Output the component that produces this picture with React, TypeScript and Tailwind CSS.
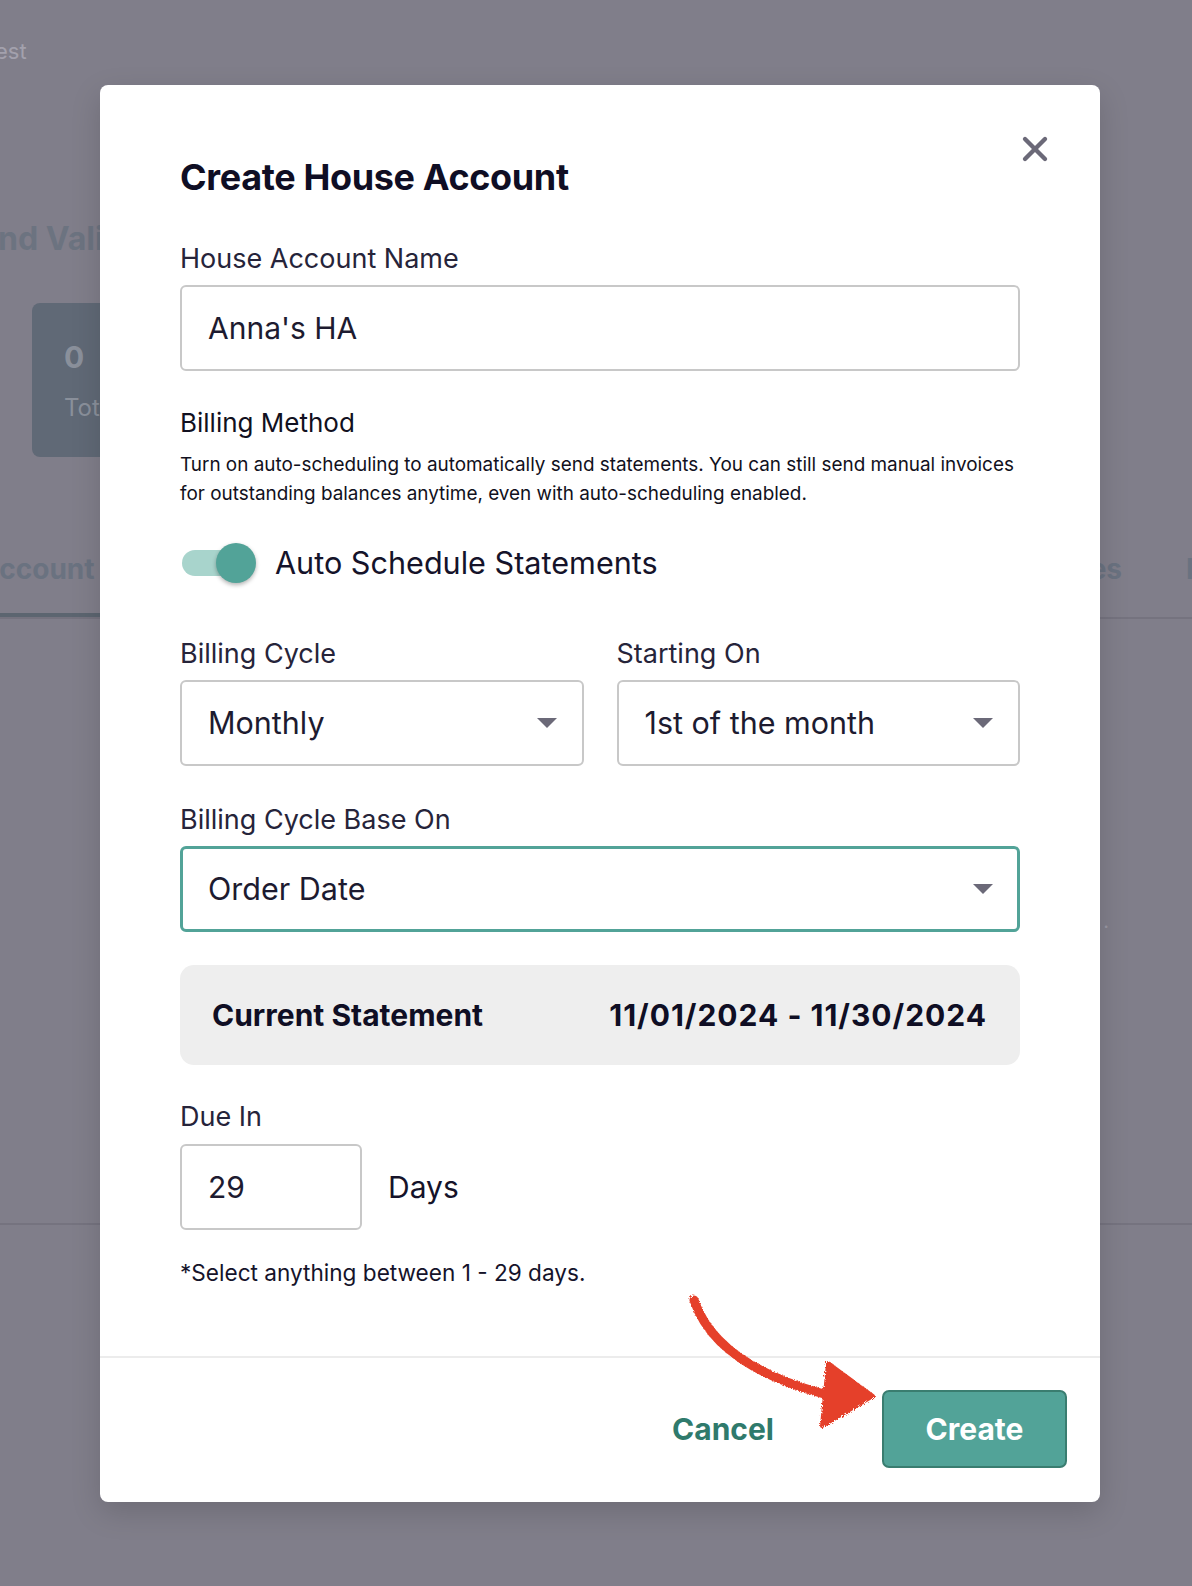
import { X } from "lucide-react";

function Chevron() {
  return (
    <svg width="20" height="10" viewBox="0 0 20 10" className="shrink-0">
      <path d="M0 0 L20 0 L10 10 Z" fill="#6b6978" />
    </svg>
  );
}

function SelectBox({ value, active }: { value: string; active?: boolean }) {
  return (
    <div
      className={
        active
          ? "flex h-[86px] items-center justify-between rounded-[6px] border-[3px] border-[#52a398] pl-[25px] pr-[24px]"
          : "flex h-[86px] items-center justify-between rounded-[6px] border-2 border-[#c8c8c8] pl-[26px] pr-[25px]"
      }
    >
      <span className="text-[30.5px] leading-[36px] text-[#1d1b30]">{value}</span>
      <Chevron />
    </div>
  );
}

function Label({ children }: { children: React.ReactNode }) {
  return <div className="text-[27px] leading-[32px] text-[#26243a]">{children}</div>;
}

function Toggle() {
  return (
    <div className="relative h-[44px] w-[78px] shrink-0">
      <div className="absolute left-[2px] top-[9px] h-[26px] w-[70px] rounded-full bg-[#a8d4cc]" />
      <div className="absolute left-[36px] top-[2px] h-[40px] w-[40px] rounded-full bg-[#52a398] shadow-[0_2px_4px_rgba(0,0,0,0.3)]" />
    </div>
  );
}

function BackgroundPage() {
  return (
    <div className="flex h-[1586px] flex-col text-[#6e7582]">
      <div className="mt-[38px] -ml-[5px] text-[22px] leading-[26px] text-[#a3a1ad]">est</div>
      <div className="mt-[157px] -ml-[2px] text-[32px] font-bold leading-[36px] text-[#6c7380]">nd Validity</div>
      <div className="ml-[32px] mt-[46px] flex h-[154px] w-[300px] flex-col rounded-[8px] bg-[#606976] pl-[32px] pt-[36px]">
        <div className="text-[30px] font-bold leading-[36px] text-[#8a909b]">0</div>
        <div className="mt-[19px] text-[24px] leading-[28px] text-[#8a909b]">Total</div>
      </div>
      <div className="mt-[94px] flex border-b-2 border-[#75737f]">
        <div className="-ml-[23px] w-[260px] border-b-4 border-[#5c6570] pb-[26px] pl-[2px] text-[28px] font-bold leading-[36px] text-[#6a7280]">
          Account
        </div>
        <div className="ml-auto flex gap-[64px] text-[28px] font-bold leading-[36px] text-[#6a7280]">
          <span>Invoices</span>
          <span className="w-[6px] overflow-hidden">I</span>
        </div>
      </div>
      <div className="flex flex-1 flex-col">
        <div className="ml-auto mr-[83px] mt-[287px] text-[20px] text-[#9a98a3]">.</div>
        <div className="mt-[287px] border-t-2 border-[#75737f]" />
      </div>
    </div>
  );
}

function Arrow() {
  return (
    <svg
      className="pointer-events-none absolute left-0 top-0"
      width="1192"
      height="1586"
      viewBox="0 0 1192 1586"
    >
      <defs>
        <filter id="rough" x="-10%" y="-10%" width="120%" height="120%">
          <feTurbulence type="fractalNoise" baseFrequency="0.9" numOctaves="2" result="n" />
          <feDisplacementMap in="SourceGraphic" in2="n" scale="5" />
        </filter>
      </defs>
      <g filter="url(#rough)" fill="#e5402a" stroke="#e5402a">
        <path d="M694 1300 C 706 1336, 742 1372, 824 1394" fill="none" strokeWidth="9" strokeLinecap="round" />
        <path d="M828 1363 L873 1396 L822 1426 Z" strokeWidth="4" strokeLinejoin="round" />
      </g>
    </svg>
  );
}

export default function App() {
  return (
    <div className="relative h-[1586px] w-full overflow-hidden bg-[#807e8a] font-['Inter',sans-serif]">
      <BackgroundPage />

      <div className="absolute inset-0 pl-[100px] pt-[85px]">
        <div className="relative flex w-[1000px] flex-col rounded-[8px] bg-white shadow-[0_10px_30px_rgba(0,0,0,0.15)]">
          <button className="absolute right-[45px] top-[44px] text-[#6b6978]">
            <X size={40} strokeWidth={2.6} />
          </button>

          <div className="flex flex-col px-[80px] pt-[70px]">
            <h1 className="text-[36px] font-bold leading-[44px] tracking-[-0.01em] text-[#0f0e24]">
              Create House Account
            </h1>

            <div className="mt-[44px]">
              <Label>House Account Name</Label>
            </div>
            <div className="mt-[10px] flex h-[86px] items-center rounded-[6px] border-2 border-[#c8c8c8] pl-[26px]">
              <span className="text-[30px] leading-[36px] text-[#1d1b30]">Anna's HA</span>
            </div>

            <div className="mt-[36px] text-[26px] leading-[32px] text-[#111020]">Billing Method</div>
            <p className="mt-[11px] text-[18.9px] leading-[29px] text-[#111020]">
              Turn on auto-scheduling to automatically send statements. You can still send manual invoices
              for outstanding balances anytime, even with auto-scheduling enabled.
            </p>

            <div className="mt-[33px] flex items-center">
              <Toggle />
              <span className="ml-[17px] text-[30.6px] leading-[36px] text-[#15132a]">Auto Schedule Statements</span>
            </div>

            <div className="mt-[53px] grid grid-cols-2 gap-x-[33px]">
              <div className="flex flex-col">
                <Label>Billing Cycle</Label>
                <div className="mt-[10px]">
                  <SelectBox value="Monthly" />
                </div>
              </div>
              <div className="flex flex-col">
                <Label>Starting On</Label>
                <div className="mt-[10px]">
                  <SelectBox value="1st of the month" />
                </div>
              </div>
            </div>

            <div className="mt-[38px]">
              <Label>Billing Cycle Base On</Label>
            </div>
            <div className="mt-[10px]">
              <SelectBox value="Order Date" active />
            </div>

            <div className="mt-[33px] flex h-[100px] items-center justify-between rounded-[14px] bg-[#eeeeee] pl-[32px] pr-[33px]">
              <span className="text-[30px] font-bold leading-[36px] text-[#0f0e24]">Current Statement</span>
              <span className="text-[30px] font-bold leading-[36px] tracking-[0.033em] text-[#0f0e24]">11/01/2024 - 11/30/2024</span>
            </div>

            <div className="mt-[36px]">
              <Label>Due In</Label>
            </div>
            <div className="mt-[11px] flex items-center">
              <div className="flex h-[86px] w-[182px] items-center rounded-[6px] border-2 border-[#c8c8c8] pl-[26px]">
                <span className="text-[30px] leading-[36px] text-[#1d1b30]">29</span>
              </div>
              <span className="ml-[26px] text-[30px] leading-[36px] text-[#15132a]">Days</span>
            </div>

            <div className="mt-[29px] pb-[69px] text-[22.6px] leading-[28px] text-[#15132a]">
              *Select anything between 1 - 29 days.
            </div>
          </div>

          <div className="flex items-center justify-end gap-[108px] border-t-2 border-[#ececec] pb-[34px] pr-[33px] pt-[32px]">
            <button className="text-[30px] font-bold leading-[36px] text-[#2f7a6c]">Cancel</button>
            <button className="flex h-[78px] w-[185px] items-center justify-center rounded-[7px] border-2 border-[#3a7d70] bg-[#52a398] text-[30px] font-bold leading-[36px] text-white">
              Create
            </button>
          </div>
        </div>
      </div>

      <Arrow />
    </div>
  );
}
